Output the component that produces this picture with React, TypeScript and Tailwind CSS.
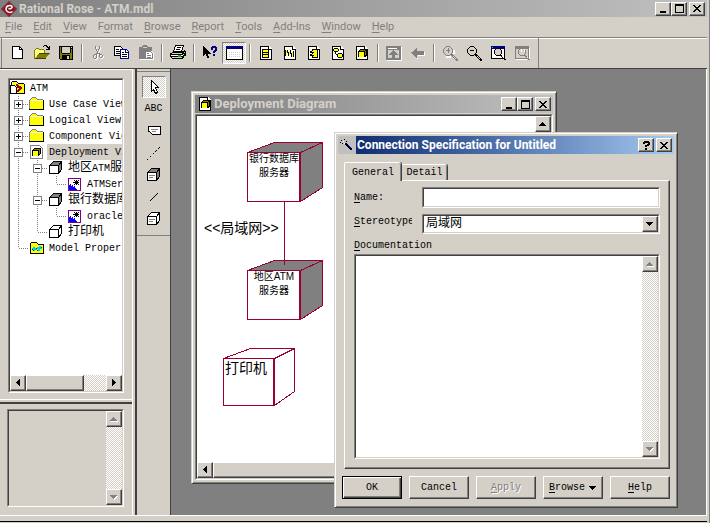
import React, { useState } from "react";
import clsx from "clsx";

const raised =
  "border border-t-white border-l-white border-r-[#404040] border-b-[#404040] bg-[#d4d0c8] shadow-[inset_-1px_-1px_0_#808080]";
const raisedDefault =
  "border border-black bg-[#d4d0c8] shadow-[inset_1px_1px_0_#fff,inset_-1px_-1px_0_#404040,inset_-2px_-2px_0_#808080]";
const sunken =
  "border border-t-[#808080] border-l-[#808080] border-r-white border-b-white";
const sunkenInner =
  "border border-t-[#404040] border-l-[#404040] border-r-[#d4d0c8] border-b-[#d4d0c8]";
const frame =
  "border border-t-[#d4d0c8] border-l-[#d4d0c8] border-r-[#404040] border-b-[#404040] bg-[#d4d0c8] shadow-[inset_1px_1px_0_#fff,inset_-1px_-1px_0_#808080]";
const track =
  "bg-[repeating-conic-gradient(#fff_0_25%,#d4d0c8_0_50%)] bg-[length:2px_2px]";

const tahoma = "font-['Roboto','Noto_Sans_CJK_SC',sans-serif]";
const simsun = "font-['Liberation_Mono','Noto_Sans_CJK_SC',monospace]";

type IconProps = { children: React.ReactNode; w?: number; h?: number };

const Icon = ({ children, w = 16, h = 16 }: IconProps) => (
  <svg
    width={w}
    height={h}
    viewBox={`0 0 ${w} ${h}`}
    fill="none"
    shapeRendering="crispEdges"
    className="block shrink-0"
    aria-hidden="true"
  >
    {children}
  </svg>
);

const RoseLogo = () => (
  <svg width="16" height="16" viewBox="0 0 16 16" className="shrink-0" aria-hidden="true">
    <path d="M8 0L16 8L8 16L0 8Z" fill="#801018" />
    <path d="M8 1.500L14.500 8L8 14.500L1.500 8Z" stroke="#c06060" strokeWidth="0.5" fill="none" />
    <path
      d="M11.500 10.500C9 12.500 5 11 5 8C5 4.500 9.500 3.500 11 5.500C11.500 7.500 9 8 7.500 7.500"
      fill="none"
      stroke="#fff"
      strokeWidth="1.500"
    />
  </svg>
);

const NewIcon = () => (
  <Icon>
    <path d="M2.500 1.500H9.500L12.500 4.500V13.500H2.500Z" fill="#fff" stroke="#000" />
    <path d="M9.500 1.500V4.500H12.500" stroke="#000" />
  </Icon>
);

const OpenIcon = () => (
  <Icon>
    <path d="M1 5H2V4H5V5H10V8H5V9H4V10H3V11H2V12H1Z" fill="#ffff80" />
    <path d="M0 5H1V14H0ZM1 4H2V5H1ZM2 3H5V4H2ZM5 4H10V5H5ZM10 5H11V8H10Z" fill="#808000" />
    <path d="M5 8H16V9H15V10H14V11H13V12H12V13H11V14H1V13H2V12H3V10H4V9H5Z" fill="#808000" />
    <path d="M1 13.500H12M5 8.500H15" stroke="#404000" />
    <path d="M9 1H10V0H13V1H14V2H15V1H16V5H12V4H14V3H13V2H12V1H10V2H9Z" fill="#000" />
  </Icon>
);

const SaveIcon = () => (
  <Icon>
    <path d="M1 1H15V15H2L1 14Z" fill="#000" />
    <path d="M2 2H3V8H4V9H12V8H13V4H14V14H2Z" fill="#808000" />
    <path d="M4 2H12V8H4Z" fill="#d4d0c8" />
    <path d="M13 2H14V3H13Z" fill="#d4d0c8" />
    <path d="M4 10H12V14H4Z" fill="#000" />
    <path d="M9 11H11V14H9Z" fill="#d4d0c8" />
  </Icon>
);

const CutShape = () => (
  <path d="M5 1H6V4H5ZM9 1H10V4H9ZM6 4H7V6H6ZM8 4H9V6H8ZM7 6H8V9H7ZM6 8H7V10H6ZM8 8H10V9H8ZM4 9H6V10H4ZM3 10H4V13H3ZM4 13H6V14H4ZM6 10H7V13H6ZM10 9H12V10H10ZM9 9H10V12H9ZM10 12H12V13H10ZM12 10H13V12H12Z" />
);

const CutIcon = () => (
  <Icon>
    <g fill="#fff" transform="translate(1 1)">
      <CutShape />
    </g>
    <g fill="#808080">
      <CutShape />
    </g>
  </Icon>
);

const CopyIcon = () => (
  <Icon>
    <path d="M0.500 1.500H6.500L8.500 3.500V10.500H0.500Z" fill="#fff" stroke="#000" />
    <path d="M2 4.500H5M2 6.500H7M2 8.500H7" stroke="#000" />
    <path d="M6.500 4.500H12.500L14.500 6.500V13.500H6.500Z" fill="#fff" stroke="#000080" />
    <path d="M11.500 4.500V7.500H14.500" stroke="#000080" />
    <path d="M8 7.500H10M8 9.500H13M8 11.500H13" stroke="#000" />
  </Icon>
);

const PasteIcon = () => (
  <Icon>
    <path d="M1 2H4V1H5V0H9V1H10V2H14V14H1Z" fill="#808080" />
    <path d="M5 2.500H9" stroke="#d4d0c8" />
    <path d="M2 14.500H7" stroke="#fff" />
    <path d="M7 6H13L16 9V15H7Z" fill="#fff" />
    <path d="M7.500 6.500H12.500L14.500 8.500V13.500H7.500Z" stroke="#808080" />
    <path d="M9 8.500H11M9 10.500H13M9 12.500H13" stroke="#808080" />
  </Icon>
);

const PrintIcon = () => (
  <Icon>
    <path d="M5.500 0.500H13.500L11.500 6.500H3.500Z" fill="#fff" stroke="#000" />
    <path d="M7 2.500H11M6 4.500H10" stroke="#000" />
    <path d="M3 6H14V5H15V6H16V11H14V13H13V14H2V13H1V12H0V8H2V7H3Z" fill="#000" />
    <path d="M2 8H12V9H2ZM2 12H12V13H2Z" fill="#d4d0c8" />
    <path d="M1 10H13V11H1Z" fill="#fff" />
    <path d="M8 10H11V12H8Z" fill="#00c000" />
    <path d="M14 7H15V8H14ZM13 9H14V10H13Z" fill="#d4d0c8" />
  </Icon>
);

const HelpPointerIcon = () => (
  <Icon>
    <path d="M1 1H2V2H3V3H4V4H5V5H6V6H7V7H8V8H9V9H6V11H7V13H5V11H4V9H3V10H2V11H1Z" fill="#000" />
    <path
      d="M9 2H10V1H14V2H15V6H14V7H13V8H11V6H12V5H13V3H11V5H9ZM11 9H13V11H11Z"
      fill="#000080"
    />
  </Icon>
);

const WindowIcon = () => (
  <Icon w={18}>
    <path d="M1.500 1.500H17.500V14.500H1.500Z" fill="#fff" stroke="#000" />
    <path d="M1 1H18V4H1Z" fill="#000080" />
    <path d="M4 7.500H16M4 9.500H16M4 11.500H16" stroke="#d4d0c8" strokeDasharray="1 1" />
  </Icon>
);

const Page = ({ children }: { children: React.ReactNode }) => (
  <Icon>
    <path d="M2 1H11L14 4V15H2Z" fill="#fff" />
    <path d="M2 1.500H11M2.500 1V15M1.500 14.500H14M13.500 15V4M10.500 2V4.500H13" stroke="#000" />
    {children}
  </Icon>
);

const ClassIcon = () => (
  <Page>
    <path d="M4.500 4.500H10.500V12.500H4.500Z" fill="#ff0" stroke="#000" />
    <path d="M5 7.500H10M5 9.500H10" stroke="#000" />
  </Page>
);

const SequenceIcon = () => (
  <Page>
    <path d="M3 5H5V10H3ZM7 6H8V10H7ZM10 7H12V12H10Z" fill="#ff0" />
    <path d="M3.500 5V11M5.500 5V8M6.500 7V11M8.500 5V9M9.500 8V12M11.500 6V12" stroke="#000" />
  </Page>
);

const ComponentIcon = () => (
  <Page>
    <path d="M6.500 4.500H11.500V12.500H6.500Z" fill="#ff0" stroke="#000" />
    <path d="M4 6H8V8H4ZM4 9H8V11H4Z" fill="#000" />
    <path d="M6 6.500H8M6 9.500H8" stroke="#ff0" />
  </Page>
);

const StateIcon = () => (
  <Page>
    <path d="M4 4H8V6H4ZM8 9H12V12H8Z" fill="#ff0" />
    <path d="M4 3.500H8M4 6.500H8M3.500 4V6M8.500 4V6M8 8.500H12M8 12.500H12M7.500 9V12M12.500 9V12M5.500 7V9M6 9.500H7" stroke="#000" />
  </Page>
);

const DeployIcon = () => (
  <Page>
    <path d="M4 6L6 4H13V10L11 12H4Z" fill="#000" />
    <path d="M5 7H10V12H5Z" fill="#ff0" />
    <path d="M6 5H11V6H6ZM11 6H12V10H11Z" fill="#808000" />
  </Page>
);

const ParentIcon = () => (
  <Icon>
    <path d="M1 15.500H15.500V2" stroke="#fff" />
    <path d="M0 1H15V15H0Z" fill="#808080" />
    <path d="M2 5H13V13H2Z" fill="#d4d0c8" />
    <path d="M2 3.500H11" stroke="#fff" />
    <path d="M7 5H8V6H9V7H10V8H11V9H12V10H9V14H6V10H3V9H4V8H5V7H6V6H7Z" fill="#808080" />
  </Icon>
);

const BackIcon = () => (
  <Icon>
    <path d="M3 9H4V10H5V11H6V12H7V13H8V11H15V7H14V10H8V14H7V13H6V12H5V11H4V10H3Z" fill="#fff" />
    <path d="M6 3H7V6H14V10H7V13H6V12H5V11H4V10H3V9H2V8H1V7H3V6H4V5H5V4H6Z" fill="#808080" />
  </Icon>
);

const Magnifier = ({ disabled, plus }: { disabled?: boolean; plus?: boolean }) => (
  <Icon>
    {disabled && (
      <path d="M11 11L15 15M4 11.500H9M11.500 5V9" stroke="#fff" strokeWidth="2" />
    )}
    <path
      d="M4 1.500H8M8 2.500H9M9.500 3V4M10.500 4V8M9.500 8V9M8 9.500H9M8 10.500H4M3 9.500H4M2.500 8V9M1.500 4V8M2.500 3V4M3 2.500H4"
      stroke={disabled ? "#808080" : "#000"}
    />
    <path
      d="M9 9H11V10H12V11H13V12H14V13H15V14H16V16H14V15H13V14H12V13H11V12H10V11H9Z"
      fill={disabled ? "#808080" : "#000"}
    />
    <path d="M11 11H12V12H13V13H14V14H13V13H12V12H11Z" fill="#d4d0c8" />
    <path d="M4 5.500H8" stroke={disabled ? "#808080" : "#000"} />
    {plus && <path d="M6.500 3V8" stroke="#808080" />}
  </Icon>
);

const FitIcon = ({ disabled }: { disabled?: boolean }) => {
  const dark = disabled ? "#808080" : "#000";
  return (
    <Icon>
      {disabled && <path d="M2 14.500H13M15.500 3V15" stroke="#fff" />}
      <path d="M1.500 1.500H14.500V13.500H1.500Z" fill={disabled ? "#d4d0c8" : "#fff"} stroke={dark} />
      <path d="M1 1H15V4H1Z" fill={disabled ? "#808080" : "#000080"} />
      {!disabled && <path d="M2 2H3V3H2Z" fill="#0f0" />}
      <path d="M6 3H10V4H11V5H12V9H11V10H10V11H6V10H5V9H4V5H5V4H6Z" fill={dark} />
      <path d="M6 4H10V5H11V9H10V10H6V9H5V5H6Z" fill="#d4d0c8" />
      <path d="M10 9H11V10H12V11H13V12H14V13H15V14H16V15H14V14H13V13H12V12H11V11H10Z" fill={dark} />
      {!disabled && <path d="M12 11H13V12H12ZM13 12H14V13H13Z" fill="#fff" />}
      {disabled && <path d="M7 4H8V7H7ZM10 4H11V7H10ZM13 12H14V13H13Z" fill="#fff" />}
    </Icon>
  );
};

const Folder = () => (
  <Icon>
    <path d="M1 4L3 2H7L9 4H14V13H1Z" fill="#ff0" />
    <path d="M0.500 13V4M1 3.500H2M2 2.500H3M3 1.500H7M7 2.500H8M8 3.500H14" stroke="#808080" />
    <path d="M2 4.500H13" stroke="#fff" />
    <path d="M0 13.500H15M14.500 4V14" stroke="#000" />
  </Icon>
);

const ModelIcon = () => (
  <Icon>
    <path d="M2 4H3V2H7V4H14V13H2Z" fill="#ff0" />
    <path d="M2 1.500H7M7 2.500H8M8 3.500H14M14.500 4V13M6 13.500H15M1.500 2V5" stroke="#000" />
    <path d="M0.500 5.500H4.500L6.500 7.500V13.500H0.500Z" fill="#fff" stroke="#000" />
    <path d="M6 4H8V5H9V6H11V7H12V9H11V10H10V11H9V12H7V10H8V9H9V8H7V6H6Z" fill="#a00020" />
  </Icon>
);

const PropsIcon = () => (
  <Icon>
    <path d="M1 4L3 2H7L9 4H14V13H1Z" fill="#ff0" stroke="#000" />
    <path d="M4 7H6V8H8V10H6V11H4V10H3V8H4ZM10 6H12V8H13V9H11V11H9V9H8V7H10Z" fill="#00d0f0" />
    <path d="M3 9H4V10H5V11H4V10H3ZM7 8H8V9H7ZM8 10H9V11H8ZM12 7H13V8H12Z" fill="#004060" />
  </Icon>
);

const DeployViewIcon = () => (
  <Icon>
    <path d="M1.500 1.500H10.500L13.500 4.500V14.500H1.500Z" fill="#fff" stroke="#808080" />
    <path d="M3 6H4V5H5V4H12V10H11V11H10V12H3Z" fill="#000" />
    <path d="M4 7H9V12H4Z" fill="#ff0" />
    <path d="M5 5H11V6H5ZM10 6H11V10H10Z" fill="#808000" />
  </Icon>
);

const CubeIcon = ({ shaded, lines }: { shaded?: boolean; lines?: boolean }) => (
  <Icon>
    <path
      d="M1.500 5.500L5.500 1.500H13.500V9.500L10.500 13.500"
      fill={shaded ? "#808080" : "#fff"}
      stroke="#000"
    />
    <path d="M10.500 5.500L13.500 1.500" stroke="#000" />
    <path d="M1.500 5.500H10.500V13.500H1.500Z" fill="#fff" stroke="#000" />
    {lines && <path d="M3 8.500H9M3 10.500H7" stroke="#808080" />}
  </Icon>
);

const ProcessIcon = () => (
  <Icon>
    <path d="M1.500 2.500H13.500V14.500H1.500Z" fill="#fff" stroke="#800080" />
    <path d="M2 9H3V8H4V10H5V9H6V11H7V10H8V12H9V13H10V14H2Z" fill="#00f" />
    <path d="M6 6.500H12M9.500 4V9" stroke="#000" />
    <path d="M7 4H8V5H7ZM11 4H12V5H11ZM7 8H8V9H7ZM11 8H12V9H11ZM8 5H11V8H8Z" fill="#000" />
  </Icon>
);

const WandIcon = () => (
  <Icon>
    <path d="M2 3H3V4H2ZM5 2H6V3H5ZM3 6H4V7H3ZM7 4H8V5H7ZM1 5H2V6H1Z" fill="#000" />
    <path d="M4 4H5V5H4ZM5 6H6V7H5Z" fill="#fff" />
    <path d="M6 6H8V7H9V8H10V9H11V10H12V11H13V13H11V12H10V11H9V10H8V9H7V8H6Z" fill="#000" />
    <path d="M9 8H10V9H11V10H12V11H11V10H10V9H9Z" fill="#00f" />
  </Icon>
);

// scroll arrows and drop-down arrows
const Arrow = ({ dir, disabled }: { dir: "up" | "down" | "left" | "right"; disabled?: boolean }) => {
  const shapes = {
    up: "M3 0H4V1H5V2H6V3H7V4H0V3H1V2H2V1H3Z",
    down: "M0 0H7V1H6V2H5V3H4V4H3V3H2V2H1V1H0Z",
    left: "M3 0H4V7H3V6H2V5H1V4H0V3H1V2H2V1H3Z",
    right: "M0 0H1V1H2V2H3V3H4V4H3V5H2V6H1V7H0Z",
  };
  return (
    <Icon w={8} h={8}>
      {disabled && <path d={shapes[dir]} fill="#fff" transform="translate(1 3)" />}
      <path
        d={shapes[dir]}
        fill={disabled ? "#808080" : "#000"}
        transform={dir === "left" || dir === "right" ? "translate(2 0)" : "translate(0 2)"}
      />
    </Icon>
  );
};

const ScrollButton = ({
  dir,
  disabled,
}: {
  dir: "up" | "down" | "left" | "right";
  disabled?: boolean;
}) => (
  <button
    type="button"
    aria-label={`Scroll ${dir}`}
    disabled={disabled}
    className={clsx("flex size-4 shrink-0 items-center justify-center", raised)}
  >
    <Arrow dir={dir} disabled={disabled} />
  </button>
);

const caption = {
  minimize: <path d="M2 8H8V10H2Z" fill="#000" />,
  maximize: <path d="M1 1H10V10H1ZM2 3V9H9V3Z" fill="#000" fillRule="evenodd" />,
  close: (
    <path
      d="M1 2H3V3H4V4H6V3H7V2H9V3H8V4H7V5H6V6H7V7H8V8H9V9H7V8H6V7H4V8H3V9H1V8H2V7H3V6H4V5H3V4H2V3H1Z"
      fill="#000"
    />
  ),
  help: <path d="M3 1H8V2H9V5H8V6H6V7H4V5H6V4H7V3H4V4H2V2H3ZM4 8H6V10H4Z" fill="#000" />,
};

const CaptionButton = ({ kind }: { kind: keyof typeof caption }) => (
  <button
    type="button"
    aria-label={kind}
    className={clsx("flex h-3.5 w-4 items-center justify-center", raised)}
  >
    <Icon w={11} h={11}>
      {caption[kind]}
    </Icon>
  </button>
);

const Key = ({ text }: { text: string }) => {
  const i = text.indexOf("&");
  if (i < 0) return <>{text}</>;
  return (
    <>
      {text.slice(0, i)}
      <span className="underline underline-offset-2">{text[i + 1]}</span>
      {text.slice(i + 2)}
    </>
  );
};

const menus = [
  "&File",
  "&Edit",
  "&View",
  "F&ormat",
  "&Browse",
  "&Report",
  "&Tools",
  "&Add-Ins",
  "&Window",
  "&Help",
];

const tools: ({ label: string; icon: React.ReactNode; pressed?: boolean } | null)[] = [
  { label: "New", icon: <NewIcon /> },
  { label: "Open", icon: <OpenIcon /> },
  { label: "Save", icon: <SaveIcon /> },
  null,
  { label: "Cut", icon: <CutIcon /> },
  { label: "Copy", icon: <CopyIcon /> },
  { label: "Paste", icon: <PasteIcon /> },
  null,
  { label: "Print", icon: <PrintIcon /> },
  null,
  { label: "Context help", icon: <HelpPointerIcon /> },
  { label: "View documentation", icon: <WindowIcon />, pressed: true },
  null,
  { label: "Browse class diagram", icon: <ClassIcon /> },
  { label: "Browse interaction diagram", icon: <SequenceIcon /> },
  { label: "Browse component diagram", icon: <ComponentIcon /> },
  { label: "Browse state machine diagram", icon: <StateIcon /> },
  { label: "Browse deployment diagram", icon: <DeployIcon /> },
  null,
  { label: "Browse parent", icon: <ParentIcon /> },
  { label: "Browse previous diagram", icon: <BackIcon /> },
  null,
  { label: "Zoom in", icon: <Magnifier disabled plus /> },
  { label: "Zoom out", icon: <Magnifier /> },
  { label: "Fit in window", icon: <FitIcon /> },
  { label: "Undo fit in window", icon: <FitIcon disabled /> },
];

// cells: | line, + - expander, L last branch
const tree: { cells: string; icon: React.ReactNode; label: string; selected?: boolean }[] = [
  { cells: "", icon: <ModelIcon />, label: "ATM" },
  { cells: "+", icon: <Folder />, label: "Use Case View" },
  { cells: "+", icon: <Folder />, label: "Logical View" },
  { cells: "+", icon: <Folder />, label: "Component View" },
  { cells: "-", icon: <DeployViewIcon />, label: "Deployment View", selected: true },
  { cells: "|-", icon: <CubeIcon shaded />, label: "地区ATM服务器" },
  { cells: "||L", icon: <ProcessIcon />, label: "ATMServer" },
  { cells: "|-", icon: <CubeIcon shaded />, label: "银行数据库服务器" },
  { cells: "||L", icon: <ProcessIcon />, label: "oracle" },
  { cells: "|L", icon: <CubeIcon />, label: "打印机" },
  { cells: "L", icon: <PropsIcon />, label: "Model Properties" },
];

const TreeCell = ({ kind }: { kind: string }) => (
  <Icon w={19} h={16}>
    <path d={kind === "L" ? "M8.500 0V8" : "M8.500 0V16"} stroke="#808080" strokeDasharray="1 1" />
    {kind !== "|" && <path d="M9 8.500H19" stroke="#808080" strokeDasharray="1 1" />}
    {(kind === "+" || kind === "-") && (
      <>
        <path d="M4.500 4.500H12.500V12.500H4.500Z" fill="#fff" stroke="#808080" />
        <path d="M6 8.500H11" stroke="#000" />
      </>
    )}
    {kind === "+" && <path d="M8.500 6V11" stroke="#000" />}
  </Icon>
);

// Latin text is half as wide as the Chinese, which is set larger beside it
const Label = ({ text }: { text: string }) => (
  <>
    {text.split(/([\u4e00-\u9fff]+)/).map((part, i) => (
      <span key={i} className={i % 2 ? "text-[12px]" : "text-[10px]"}>
        {part}
      </span>
    ))}
  </>
);

const Browser = () => (
  <div className="flex w-[133px] shrink-0 flex-col border-t border-r border-white">
    <div className={clsx("mt-2 mr-2 ml-2 flex min-h-0 flex-1 flex-col", sunken)}>
      <div className={clsx("flex min-h-0 flex-1 flex-col bg-white", sunkenInner)}>
        <ul className={clsx("min-h-0 flex-1 overflow-hidden", simsun)}>
          {tree.map((row) => (
            <li key={row.label} className="flex h-4 items-center whitespace-nowrap">
              {row.cells.split("").map((c, i) => (
                <TreeCell key={i} kind={c} />
              ))}
              {row.icon}
              <span
                className={clsx(
                  "ml-0.5 flex h-4 grow items-center pl-0.5 leading-4",
                  row.selected && "bg-[#d4d0c8]",
                )}
              >
                <span>
                  <Label text={row.label} />
                </span>
              </span>
            </li>
          ))}
        </ul>
        <div className={clsx("flex", track)}>
          <ScrollButton dir="left" />
          <div className={clsx("w-[58px]", raised)} />
          <div className="flex-1" />
          <ScrollButton dir="right" />
        </div>
      </div>
    </div>
    <div className="mt-1.5 h-[5px] border-t border-b-2 border-t-white border-b-[#404040]" />
    <div className={clsx("mt-[5px] mr-2 mb-2 ml-[7px] h-[98px]", sunken)}>
      <div className={clsx("flex h-full justify-end", sunkenInner)}>
        <div className={clsx("flex flex-col justify-between", track)}>
          <ScrollButton dir="up" disabled />
          <ScrollButton dir="down" disabled />
        </div>
      </div>
    </div>
  </div>
);

const toolbox: { label: string; icon: React.ReactNode }[] = [
  {
    label: "Selection",
    icon: (
      <Icon>
        <path
          d="M5.500 1.500L12.500 8.500H9.500L11.500 13.500L9.500 14.500L7.500 10.500L5.500 12.500Z"
          fill="#fff"
          stroke="#000"
        />
      </Icon>
    ),
  },
  { label: "Text", icon: <span className="text-[10px] leading-4">ABC</span> },
  {
    label: "Note",
    icon: (
      <Icon>
        <path d="M2.500 3.500H14.500V11.500H6.500L3.500 8.500H2.500Z" fill="#fff" stroke="#000" />
        <path d="M5 6.500H12M6 8.500H10" stroke="#808080" />
      </Icon>
    ),
  },
  {
    label: "Anchor",
    icon: (
      <Icon>
        <path d="M1 15L15 1" stroke="#000" strokeDasharray="2 2" />
      </Icon>
    ),
  },
  { label: "Processor", icon: <CubeIcon shaded lines /> },
  {
    label: "Connection",
    icon: (
      <Icon>
        <path d="M4 12L12 4" stroke="#000" />
      </Icon>
    ),
  },
  { label: "Device", icon: <CubeIcon lines /> },
];

const Toolbox = () => (
  <div className="flex w-[38px] shrink-0 border-r border-[#404040]">
    <div className="w-1 border-r-2 border-[#404040]" />
    <div
      className={clsx(
        "mt-0.5 flex h-[165px] flex-1 flex-col items-center border-t border-b border-[#808080] pt-1",
        simsun,
      )}
    >
      {toolbox.map((t, i) => (
        <button
          key={t.label}
          type="button"
          aria-label={t.label}
          className={clsx(
            "flex h-[22px] w-6 items-center justify-center",
            i === 0 && [sunken, track],
          )}
        >
          {t.icon}
        </button>
      ))}
    </div>
  </div>
);

const Node = ({
  className,
  shaded,
  children,
}: {
  className: string;
  shaded?: boolean;
  children: React.ReactNode;
}) => {
  const w = shaded ? 54 : 52;
  const dx = shaded ? 22 : 20;
  const top = shaded ? "#808080" : "#fff";
  const h = shaded ? 49 : 47;
  return (
    <div className={clsx("absolute", className)}>
      <svg
        width={w + dx}
        height={h + 13}
        viewBox={`0 0 ${w + dx} ${h + 13}`}
        shapeRendering="crispEdges"
        className="absolute top-0 left-0"
        aria-hidden="true"
      >
        <path
          d={`M.5 10.500L27.500 .5H${w + dx - 0.5}V${h - 3.5}L${w - 0.5} ${h + 10.5}V10.500Z`}
          fill={top}
          stroke="#990033"
        />
        <path d={`M${w - 0.5} 10.500L${w + dx - 0.5} .5`} stroke="#990033" />
        <path
          d={`M.5 10.500H${w - 0.5}V${h + 10.5}H.5Z`}
          fill="#fff"
          stroke="#990033"
        />
        <path d={`M${w - 1} 10V${h + 11}`} stroke="#990033" strokeWidth="2" />
      </svg>
      <div className="relative pt-2.5">{children}</div>
    </div>
  );
};

const DiagramWindow = () => (
  <section className={clsx("absolute top-[22px] left-5 w-[366px] p-[3px]", frame)}>
    <header className="flex h-[18px] items-center bg-linear-to-r from-[#808080] to-[#c0c0c0] pr-0.5 pl-0.5">
      <DeployIcon />
      <h2 className={clsx("ml-px flex-1 text-[13px] font-bold text-[#d4d0c8]", tahoma)}>
        Deployment Diagram
      </h2>
      <CaptionButton kind="minimize" />
      <CaptionButton kind="maximize" />
      <span className="w-0.5" />
      <CaptionButton kind="close" />
    </header>
    <div className={clsx("mt-px", sunken)}>
      <div className={clsx("h-[364px] bg-white", sunkenInner)}>
        <div className="flex h-[346px]">
          <div className="relative flex-1 overflow-hidden font-['Liberation_Sans','Noto_Sans_CJK_SC',sans-serif] text-black">
            <Node className="top-[26px] left-[50px] w-[54px]" shaded>
              <p className="text-center text-[10px] leading-[14px] whitespace-nowrap">
                银行数据库
                <br />
                服务器
              </p>
            </Node>
            <Node className="top-36 left-[50px] w-[54px]" shaded>
              <p className="text-center text-[10px] leading-[14px]">
                地区ATM
                <br />
                服务器
              </p>
            </Node>
            <Node className="top-[232px] left-[26px] w-[52px]">
              <p className="pl-0.5 text-[14px] leading-5">打印机</p>
            </Node>
            <div className="absolute top-[86px] left-[87px] h-[63px] w-px bg-[#990033]" />
            <p className="absolute top-[102px] left-[7px] text-[14px] leading-5">
              &lt;&lt;局域网&gt;&gt;
            </p>
          </div>
          <div className={clsx("flex flex-col justify-between", track)}>
            <ScrollButton dir="up" />
            <ScrollButton dir="down" />
          </div>
        </div>
        <div className={clsx("mr-4 flex", track)}>
          <ScrollButton dir="left" />
          <div className={clsx("w-[200px]", raised)} />
          <div className="flex-1" />
          <ScrollButton dir="right" />
        </div>
      </div>
    </div>
  </section>
);

const dialogButtons = [
  { text: "OK", isDefault: true },
  { text: "Cancel" },
  { text: "&Apply", disabled: true },
  { text: "&Browse", arrow: true },
  { text: "&Help" },
];

const SpecDialog = () => {
  const [tab, setTab] = useState("General");
  const [name, setName] = useState("");
  const [stereotype, setStereotype] = useState("局域网");
  const [docs, setDocs] = useState("");

  return (
    <section
      role="dialog"
      aria-label="Connection Specification"
      className={clsx("absolute top-[132px] left-[334px] w-[344px] p-[3px]", frame)}
    >
      <header className="flex h-[18px] items-center bg-linear-to-r from-[#0a246a] to-[#a6caf0] pr-0.5">
        <span className="flex h-[18px] w-[18px] items-center justify-center bg-[#c0c0c0]">
          <WandIcon />
        </span>
        <h2 className={clsx("ml-px flex-1 text-[12px] font-bold text-white", tahoma)}>
          Connection Specification for Untitled
        </h2>
        <CaptionButton kind="help" />
        <span className="w-0.5" />
        <CaptionButton kind="close" />
      </header>

      <form
        className={clsx("pt-2 pr-1 pb-[5px] pl-1.5 text-[10px]", simsun)}
        onSubmit={(e) => e.preventDefault()}
      >
        <div role="tablist" className="relative flex h-[18px] items-end">
          {["General", "Detail"].map((t) => (
            <button
              key={t}
              type="button"
              role="tab"
              aria-selected={tab === t}
              onClick={() => setTab(t)}
              className={clsx(
                "rounded-t-xs border-t border-l border-t-white border-l-white bg-[#d4d0c8] shadow-[inset_-1px_0_0_#808080,1px_0_0_#404040]",
                tab === t ? "z-10 -mb-px h-[19px] w-[57px]" : "h-4 w-[46px]",
              )}
            >
              {t}
            </button>
          ))}
        </div>

        <div className={clsx("px-[9px] pt-1.5 pb-[9px]", raised)}>
          <div className="grid grid-cols-[58px_1fr] items-start gap-x-2.5 gap-y-1.5">
            <label htmlFor="name" className="leading-[21px]">
              <Key text="&Name:" />
            </label>
            <div className={sunken}>
              <input
                id="name"
                value={name}
                onChange={(e) => setName(e.target.value)}
                className={clsx("block h-[19px] w-full bg-white px-1 outline-none", sunkenInner)}
              />
            </div>
            <label htmlFor="stereotype" className="overflow-hidden leading-4">
              <Key text="&Stereotype:" />
            </label>
            <div className={sunken}>
              <div className={clsx("flex h-[18px] bg-white", sunkenInner)}>
                <select
                  id="stereotype"
                  value={stereotype}
                  onChange={(e) => setStereotype(e.target.value)}
                  className="flex-1 appearance-none pl-0.5 text-[12px] leading-4 outline-none"
                >
                  <option>局域网</option>
                </select>
                <span className={clsx("flex w-4 items-center justify-center", raised)}>
                  <Arrow dir="down" />
                </span>
              </div>
            </div>
          </div>

          <label htmlFor="docs" className="mt-1 block h-4 leading-4">
            <Key text="&Documentation" />
          </label>
          <div className={sunken}>
            <div className={clsx("flex h-[203px] bg-white", sunkenInner)}>
              <textarea
                id="docs"
                value={docs}
                onChange={(e) => setDocs(e.target.value)}
                className="flex-1 resize-none p-0.5 outline-none"
              />
              <div className={clsx("flex flex-col justify-between", track)}>
                <ScrollButton dir="up" disabled />
                <ScrollButton dir="down" disabled />
              </div>
            </div>
          </div>
        </div>

        <div className="mt-[7px] -ml-0.5 flex justify-between">
          {dialogButtons.map((b) => (
            <button
              key={b.text}
              type="button"
              disabled={b.disabled}
              className={clsx(
                "flex h-[23px] w-[60px] items-center justify-center gap-1",
                b.isDefault ? raisedDefault : raised,
                b.disabled && "text-[#808080] text-shadow-[1px_1px_0_#fff]",
              )}
            >
              <span>
                <Key text={b.text} />
              </span>
              {b.arrow && <Arrow dir="down" />}
            </button>
          ))}
        </div>
      </form>
    </section>
  );
};

export default function App() {
  return (
    <div className="relative flex h-screen flex-col overflow-hidden border-r border-[#808080] bg-[#d4d0c8] pr-0.5 text-black">
      <header className="flex h-[17px] shrink-0 items-center bg-linear-to-r from-[#808080] to-[#c0c0c0] pr-0.5 pl-px">
        <RoseLogo />
        <h1 className={clsx("ml-0.5 flex-1 text-[12px] font-bold text-[#d4d0c8]", tahoma)}>
          Rational Rose - ATM.mdl
        </h1>
        <CaptionButton kind="minimize" />
        <CaptionButton kind="maximize" />
        <span className="w-0.5" />
        <CaptionButton kind="close" />
      </header>

      <nav
        className={clsx(
          "flex h-5 shrink-0 items-center gap-[11px] pl-[5px] text-[11px] text-[#808080]",
          tahoma,
        )}
      >
        {menus.map((m) => (
          <button key={m} type="button">
            <Key text={m} />
          </button>
        ))}
      </nav>

      <div className="flex h-8 shrink-0 items-center border-t border-b border-t-[#808080] border-b-[#404040] shadow-[inset_0_1px_0_#fff]">
        <div className="ml-px flex h-full items-center border-r border-l border-[#808080] pr-1 pl-1">
          {tools.map((t, i) =>
            t ? (
              <button
                key={t.label}
                type="button"
                aria-label={t.label}
                className={clsx(
                  "flex h-[22px] w-6 items-center justify-center",
                  t.pressed && [sunken, track],
                )}
              >
                {t.icon}
              </button>
            ) : (
              <div key={i} className="flex w-2 justify-center">
                <div className="h-[18px] w-0.5 border-r border-l border-r-white border-l-[#808080]" />
              </div>
            ),
          )}
        </div>
      </div>

      <main className="flex min-h-0 flex-1">
        <Browser />
        <Toolbox />
        <div className="relative flex-1 overflow-hidden border-r border-white bg-[#808080]">
          <DiagramWindow />
        </div>
      </main>

      <footer className="h-2 shrink-0 border-t border-white pt-[5px]">
        <div className="h-px bg-black" />
      </footer>

      <SpecDialog />
    </div>
  );
}
